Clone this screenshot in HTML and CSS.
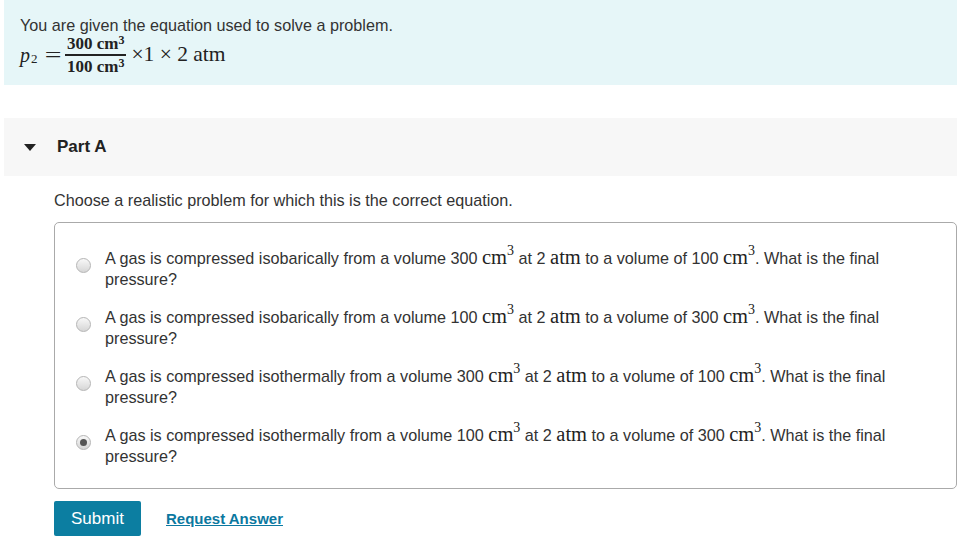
FILE: index.html
```html
<!DOCTYPE html>
<html lang="en">
<head>
  <meta charset="UTF-8">
  <meta name="viewport" content="width=device-width, initial-scale=1.0">
  <title>Part A</title>
  <link rel="stylesheet" href="styles.css">
</head>
<body>
  <div id="page">
    <!-- Intro -->
    <div id="intro">
      <p class="intro-text">You are given the equation used to solve a problem.</p>
      <div class="equation">
        <span class="var">p</span><span class="sub">2</span>
        <span class="op">=</span>
        <span class="frac">
          <span class="num">300 cm<sup>3</sup></span>
          <span class="den">100 cm<sup>3</sup></span>
        </span>
        <span class="rest">×1 × 2 atm</span>
      </div>
    </div>

    <!-- Part header -->
    <div id="part-header">
      <span class="caret"></span>
      <h2>Part A</h2>
    </div>

    <div id="part-body">
      <p class="question">Choose a realistic problem for which this is the correct equation.</p>

      <div id="choices">
        <label class="choice">
          <span class="radio"></span>
          <span class="choice-text">A gas is compressed isobarically from a volume 300 <span class="m">cm<sup>3</sup></span> at 2 <span class="m">atm</span> to a volume of 100 <span class="m">cm<sup>3</sup></span>. What is the final pressure?</span>
        </label>
        <label class="choice">
          <span class="radio"></span>
          <span class="choice-text">A gas is compressed isobarically from a volume 100 <span class="m">cm<sup>3</sup></span> at 2 <span class="m">atm</span> to a volume of 300 <span class="m">cm<sup>3</sup></span>. What is the final pressure?</span>
        </label>
        <label class="choice">
          <span class="radio"></span>
          <span class="choice-text">A gas is compressed isothermally from a volume 300 <span class="m">cm<sup>3</sup></span> at 2 <span class="m">atm</span> to a volume of 100 <span class="m">cm<sup>3</sup></span>. What is the final pressure?</span>
        </label>
        <label class="choice">
          <span class="radio checked"></span>
          <span class="choice-text">A gas is compressed isothermally from a volume 100 <span class="m">cm<sup>3</sup></span> at 2 <span class="m">atm</span> to a volume of 300 <span class="m">cm<sup>3</sup></span>. What is the final pressure?</span>
        </label>
      </div>

      <div class="actions">
        <button id="submit-btn">Submit</button>
        <a href="#" class="request-link">Request Answer</a>
      </div>
    </div>
  </div>
</body>
</html>
```

FILE: styles.css
```css
body {
  font-family: "Liberation Sans", Arial, sans-serif;
  margin: 0;
  padding: 0;
  background: white;
  color: #333;
}

#page {
  margin: 0 12px 0 4px;
}

/* Intro box */
#intro {
  background: #e6f6f8;
  padding: 15px 16px 0 16px;
  height: 70px;
}

.intro-text {
  margin: 0;
  font-size: 16.2px;
  line-height: 20px;
}

.equation {
  display: flex;
  align-items: center;
  font-family: "Liberation Serif", "Times New Roman", serif;
  font-size: 20px;
  color: #222;
  margin-top: 0;
}

.equation .var {
  font-style: italic;
}

.equation .sub {
  font-size: 13px;
  position: relative;
  top: 4px;
  margin-left: 1px;
}

.equation .op {
  font-size: 22px;
  margin: 0 6px 0 9px;
  transform: scaleX(1.35);
}

.frac {
  display: inline-flex;
  flex-direction: column;
  align-items: center;
  font-size: 17px;
  font-weight: bold;
  line-height: 17px;
}

.frac .num {
  border-bottom: 2px solid #222;
  padding: 0 2px 2px;
}

.frac .den {
  padding: 2px 2px 0;
}

.frac sup {
  font-size: 12px;
  line-height: 0;
  vertical-align: 5px;
}

.equation .rest {
  margin-left: 5px;
  font-size: 21.5px;
  position: relative;
  top: -1px;
}

/* Part header */
#part-header {
  display: flex;
  align-items: center;
  background: #f7f7f7;
  height: 58px;
  margin-top: 33px;
  padding-left: 20px;
}

.caret {
  width: 0;
  height: 0;
  border-left: 6px solid transparent;
  border-right: 6px solid transparent;
  border-top: 7px solid #222;
  margin-right: 21px;
}

#part-header h2 {
  margin: 0;
  font-size: 17px;
  font-weight: bold;
  color: #222;
}

/* Part body */
#part-body {
  padding-left: 50px;
}

.question {
  margin: 14px 0 12px;
  font-size: 16.2px;
  line-height: 20px;
}

#choices {
  border: 1px solid #aaa;
  border-radius: 5px;
  padding: 25px 20px 21px 21px;
}

.choice {
  display: flex;
  align-items: center;
  margin-bottom: 17px;
  cursor: pointer;
}

.choice:last-child {
  margin-bottom: 0;
}

.radio {
  flex: none;
  width: 13px;
  height: 13px;
  border: 1px solid #b5b5b5;
  border-radius: 50%;
  background: linear-gradient(#f8f8f8, #d6d6d6);
  margin-right: 14px;
  position: relative;
  top: -4px;
}

.radio.checked::after {
  content: "";
  position: absolute;
  left: 3px;
  top: 3px;
  width: 7px;
  height: 7px;
  border-radius: 50%;
  background: #555;
}

.choice-text {
  font-size: 16.2px;
  line-height: 21px;
  color: #333;
}

.m {
  font-family: "Liberation Serif", "Times New Roman", serif;
  font-size: 20.5px;
  line-height: 0;
  color: #222;
}

.m sup {
  font-size: 14px;
  line-height: 0;
  vertical-align: 9px;
}

/* Actions */
.actions {
  display: flex;
  align-items: center;
  margin-top: 12px;
}

#submit-btn {
  background-color: #0c7ea1;
  color: white;
  border: none;
  border-radius: 2px;
  width: 87px;
  height: 35px;
  font-family: "Liberation Sans", Arial, sans-serif;
  font-size: 17px;
  cursor: pointer;
}

.request-link {
  margin-left: 25px;
  color: #0b78a0;
  font-weight: bold;
  font-size: 15px;
  text-decoration: underline;
}
```
